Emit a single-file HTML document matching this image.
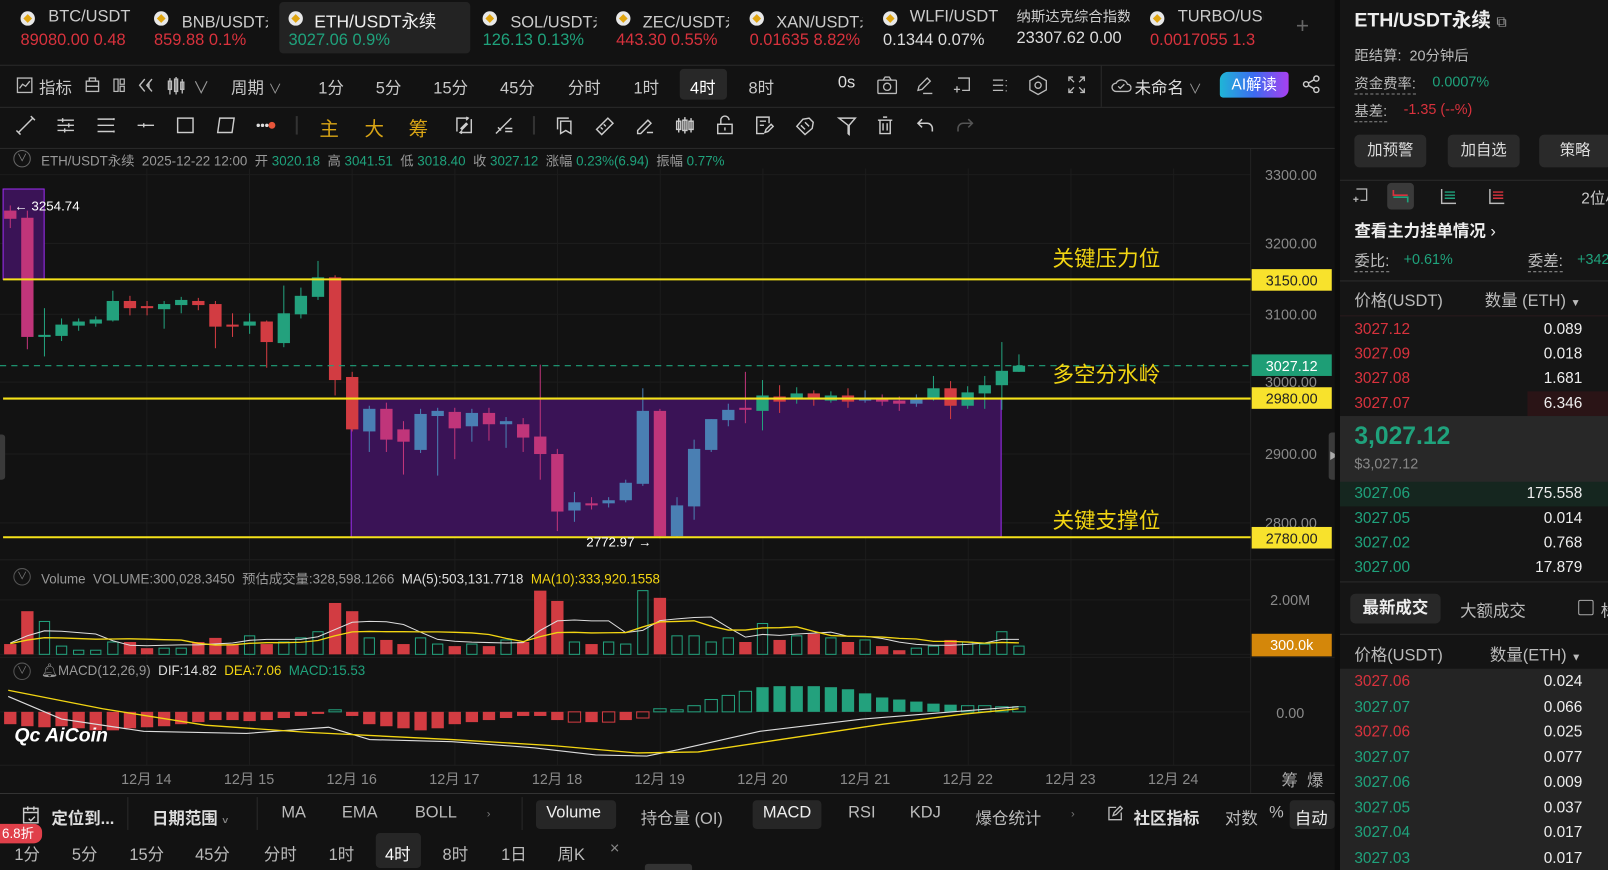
<!DOCTYPE html>
<html><head><meta charset="utf-8">
<style>
*{margin:0;padding:0;box-sizing:border-box}
html,body{width:1608px;height:870px;overflow:hidden;background:#121212}
body{font-family:"Liberation Sans","Noto Sans CJK SC",sans-serif;color:#c8c8c8}
#w{position:absolute;left:0;top:0;width:1566px;height:847px;transform:scale(1.0268,1.0272);transform-origin:0 0;background:#121212;overflow:hidden}
.a{position:absolute;white-space:nowrap}
.g{color:#1fa27c}.r{color:#d9323d}
.coin{position:absolute;width:14px;height:14px;border-radius:50%;background:#e8e8e8}
.coin:after{content:"";position:absolute;left:4px;top:4px;width:6px;height:6px;background:#e0a510;transform:rotate(45deg)}
.sep{position:absolute;background:#2a2a2a}
.t2{font-size:16px;color:#c8c8c8;top:72px}
.ic{position:absolute;top:112px;width:20px;height:20px}
.bt{font-size:16px;color:#bbb;top:783px}
.bt2{font-size:16px;color:#bbb;top:818px}
#rp{position:absolute;left:1305px;top:0;width:261px;height:847px;background:#151515}
.row{position:absolute;left:0;width:261px;height:24px;font-size:15px}
.row .p{position:absolute;left:14px;top:3px}
.row .q{position:absolute;right:25px;top:3px;color:#eee}
</style></head><body><div id="w">

<div class="a" style="left:272px;top:2px;width:186px;height:50px;background:#232323;border-radius:4px"></div>
<div class="coin" style="left:20px;top:11px"></div><div class="a" style="left:47px;top:8px;font-size:16px;color:#ccc">BTC/USDT</div><div class="a r" style="left:20px;top:31px;font-size:16px;width:110px;overflow:hidden">89080.00 0.48</div>
<div class="coin" style="left:150px;top:11px"></div><div class="a" style="left:177px;top:8px;font-size:16px;color:#ccc;width:84px;overflow:hidden">BNB/USDT永</div><div class="a r" style="left:150px;top:31px;font-size:16px">859.88 0.1%</div>
<div class="coin" style="left:281px;top:11px"></div><div class="a" style="left:306px;top:7px;font-size:17px;color:#eee">ETH/USDT永续</div><div class="a g" style="left:281px;top:31px;font-size:16px">3027.06 0.9%</div>
<div class="coin" style="left:470px;top:11px"></div><div class="a" style="left:497px;top:8px;font-size:16px;color:#ccc;width:84px;overflow:hidden">SOL/USDT永</div><div class="a g" style="left:470px;top:31px;font-size:16px">126.13 0.13%</div>
<div class="coin" style="left:600px;top:11px"></div><div class="a" style="left:626px;top:8px;font-size:16px;color:#ccc;width:84px;overflow:hidden">ZEC/USDT永</div><div class="a r" style="left:600px;top:31px;font-size:16px">443.30 0.55%</div>
<div class="coin" style="left:730px;top:11px"></div><div class="a" style="left:756px;top:8px;font-size:16px;color:#ccc;width:84px;overflow:hidden">XAN/USDT永</div><div class="a r" style="left:730px;top:31px;font-size:16px;width:110px;overflow:hidden">0.01635 8.82%</div>
<div class="coin" style="left:860px;top:11px"></div><div class="a" style="left:886px;top:8px;font-size:16px;color:#ccc">WLFI/USDT</div><div class="a" style="left:860px;top:31px;font-size:16px;color:#ddd">0.1344 0.07%</div>
<div class="a" style="left:990px;top:6px;font-size:14px;color:#ccc;width:110px;overflow:hidden">纳斯达克综合指数</div><div class="a" style="left:990px;top:29px;font-size:16px;color:#ddd;width:110px;overflow:hidden">23307.62 0.00</div>
<div class="coin" style="left:1120px;top:11px"></div><div class="a" style="left:1147px;top:8px;font-size:16px;color:#ccc;width:84px;overflow:hidden">TURBO/USDT</div><div class="a r" style="left:1120px;top:31px;font-size:16px;width:110px;overflow:hidden">0.0017055 1.3</div>
<div class="a" style="left:1262px;top:12px;font-size:22px;color:#666">+</div>
<div class="sep" style="left:0;top:63px;width:1300px;height:1px"></div>

<svg class="a" style="left:16px;top:75px" width="16" height="16" viewBox="0 0 16 16" fill="none" stroke="#bbb" stroke-width="1.3"><rect x="1" y="1" width="14" height="14"/><path d="M3 11l3-4 3 2 4-5"/></svg>
<div class="a t2" style="left:38px">指标</div>
<svg class="a" style="left:83px;top:75px" width="14" height="16" viewBox="0 0 14 16" fill="none" stroke="#bbb" stroke-width="1.3"><rect x="1" y="4" width="12" height="10"/><path d="M1 9h12M4 4V1h6v3"/></svg>
<svg class="a" style="left:110px;top:76px" width="12" height="14" viewBox="0 0 12 14" fill="none" stroke="#bbb" stroke-width="1.2"><rect x="1" y="1" width="4" height="12"/><rect x="7" y="1" width="4" height="5"/><rect x="7" y="8" width="4" height="5"/></svg>
<svg class="a" style="left:134px;top:75px" width="16" height="16" viewBox="0 0 16 16" fill="none" stroke="#bbb" stroke-width="1.4"><path d="M7 2L2 8l5 6M14 2l-5 6 5 6M11 5v6"/></svg>
<svg class="a" style="left:162px;top:74px" width="18" height="18" viewBox="0 0 18 18" fill="none" stroke="#bbb" stroke-width="1.3"><rect x="2" y="5" width="3" height="8"/><rect x="8" y="3" width="3" height="12"/><rect x="14" y="6" width="3" height="7"/><path d="M3.5 2v16M9.5 1v17M15.5 3v14"/></svg>
<div class="a t2" style="left:188px;color:#999">∨</div>
<div class="a t2" style="left:225px">周期 <span style="color:#999;font-size:13px">∨</span></div>
<div class="a t2" style="left:310px">1分</div><div class="a t2" style="left:366px">5分</div><div class="a t2" style="left:422px">15分</div><div class="a t2" style="left:487px">45分</div><div class="a t2" style="left:553px">分时</div><div class="a t2" style="left:617px">1时</div>
<div class="a" style="left:662px;top:67px;width:46px;height:30px;background:#282828;border-radius:4px"></div><div class="a t2" style="left:672px;color:#fff">4时</div>
<div class="a t2" style="left:729px">8时</div><div class="a t2" style="left:816px;color:#ddd">0s</div>
<svg class="a" style="left:854px;top:74px" width="20" height="18" viewBox="0 0 20 18" fill="none" stroke="#bbb" stroke-width="1.3"><rect x="1" y="4" width="18" height="13" rx="1"/><circle cx="10" cy="10.5" r="3.5"/><path d="M6 4l2-3h4l2 3"/></svg>
<svg class="a" style="left:891px;top:74px" width="18" height="18" viewBox="0 0 18 18" fill="none" stroke="#bbb" stroke-width="1.3"><path d="M3 14l1-4 8-8 3 3-8 8-4 1zM8 17h9"/></svg>
<svg class="a" style="left:928px;top:74px" width="18" height="18" viewBox="0 0 18 18" fill="none" stroke="#bbb" stroke-width="1.3"><path d="M5 2h11v12H9M1 13h6M4 10v6"/></svg>
<svg class="a" style="left:966px;top:75px" width="16" height="16" viewBox="0 0 16 16" fill="none" stroke="#bbb" stroke-width="1.3"><path d="M1 3h10M1 8h10M1 13h10M14 3v1M14 8v1M14 13v1"/></svg>
<svg class="a" style="left:1002px;top:73px" width="18" height="20" viewBox="0 0 18 20" fill="none" stroke="#bbb" stroke-width="1.3"><path d="M9 1l8 4.5v9L9 19l-8-4.5v-9z"/><circle cx="9" cy="10" r="3"/></svg>
<svg class="a" style="left:1040px;top:74px" width="17" height="17" viewBox="0 0 17 17" fill="none" stroke="#bbb" stroke-width="1.3"><path d="M1 5V1h4M12 1h4v4M16 12v4h-4M5 16H1v-4M1 1l5 5M16 1l-5 5M16 16l-5-5M1 16l5-5"/></svg>
<div class="sep" style="left:1072px;top:64px;width:1px;height:40px"></div>
<svg class="a" style="left:1082px;top:75px" width="20" height="16" viewBox="0 0 20 16" fill="none" stroke="#bbb" stroke-width="1.3"><path d="M5 14a4 4 0 010-8 6 6 0 0111 1 3.5 3.5 0 010 7z"/><path d="M7 9l2 2 4-4"/></svg>
<div class="a t2" style="left:1105px;color:#ddd">未命名 <span style="color:#999;font-size:13px">∨</span></div>
<div class="a" style="left:1188px;top:70px;width:67px;height:25px;border-radius:8px 3px 8px 3px;background:linear-gradient(90deg,#1fb5d6,#3d6bf0,#a840f0);color:#fff;font-size:15px;text-align:center;line-height:25px">AI解读</div>
<svg class="a" style="left:1268px;top:73px" width="18" height="18" viewBox="0 0 18 18" fill="none" stroke="#ccc" stroke-width="1.4"><circle cx="14" cy="3.5" r="2.5"/><circle cx="4" cy="9" r="2.5"/><circle cx="14" cy="14.5" r="2.5"/><path d="M6 8l6-3.5M6 10l6 3.5"/></svg>
<div class="sep" style="left:0;top:104px;width:1300px;height:1px"></div>

<svg class="ic" style="left:15px" viewBox="0 0 20 20" fill="none" stroke="#ccc" stroke-width="1.4"><path d="M3 17L17 3M1 15l4 4M15 1l4 4"/></svg>
<svg class="ic" style="left:54px" viewBox="0 0 20 20" fill="none" stroke="#ccc" stroke-width="1.4"><path d="M2 5h16M2 10h16M2 15h16M7 3v4M13 8v4M9 13v4"/></svg>
<svg class="ic" style="left:93px" viewBox="0 0 20 20" fill="none" stroke="#ccc" stroke-width="1.4"><path d="M2 4h16M2 10h16M2 16h16M18 3v2M18 15v2"/></svg>
<svg class="ic" style="left:132px" viewBox="0 0 20 20" fill="none" stroke="#ccc" stroke-width="1.4"><path d="M2 10h16M8 8v4"/></svg>
<svg class="ic" style="left:171px" viewBox="0 0 20 20" fill="none" stroke="#ccc" stroke-width="1.4"><rect x="2" y="3" width="15" height="14"/></svg>
<svg class="ic" style="left:210px" viewBox="0 0 20 20" fill="none" stroke="#ccc" stroke-width="1.4"><path d="M4 3h14l-2 14H2z"/></svg>
<svg class="ic" style="left:249px" viewBox="0 0 24 20"><circle cx="3" cy="10" r="2" fill="#ddd"/><circle cx="8" cy="10" r="2" fill="#ddd"/><circle cx="13" cy="10" r="2" fill="#ddd"/><circle cx="19" cy="10" r="4" fill="#e8553a"/></svg>
<div class="sep" style="left:288px;top:113px;width:2px;height:18px;background:#333"></div>
<div class="a" style="left:311px;top:111px;font-size:19px;color:#d9a515">主</div>
<div class="a" style="left:355px;top:111px;font-size:19px;color:#d9a515">大</div>
<div class="a" style="left:398px;top:111px;font-size:19px;color:#d9a515">筹</div>
<svg class="ic" style="left:442px" viewBox="0 0 20 20" fill="none" stroke="#ccc" stroke-width="1.4"><path d="M3 16V3h11M17 4v13H6M12 2l2 1-2 2M8 18l-2-1 2-2M7 13l5-5 1 1-5 5z"/></svg>
<svg class="ic" style="left:481px" viewBox="0 0 20 20" fill="none" stroke="#ccc" stroke-width="1.4"><path d="M2 18L17 3M4 12l3 3M11 13h7M11 16h7"/></svg>
<div class="sep" style="left:519px;top:113px;width:2px;height:18px;background:#333"></div>
<svg class="ic" style="left:540px" viewBox="0 0 20 20" fill="none" stroke="#ccc" stroke-width="1.4"><path d="M3 14V3h11M6 6h10v12l-5-3-5 3z"/></svg>
<svg class="ic" style="left:579px" viewBox="0 0 20 20" fill="none" stroke="#ccc" stroke-width="1.4"><path d="M2 14L13 3l5 5L7 19zM6 12l2 2M9 9l2 2"/></svg>
<svg class="ic" style="left:618px" viewBox="0 0 20 20" fill="none" stroke="#ccc" stroke-width="1.4"><path d="M3 15L13 5l3 3L6 18H3zM12 17h6"/></svg>
<svg class="ic" style="left:657px" viewBox="0 0 20 20" fill="none" stroke="#ccc" stroke-width="1.4"><rect x="2" y="6" width="4" height="8"/><rect x="8" y="5" width="4" height="10"/><rect x="14" y="6" width="4" height="8"/><path d="M4 3v14M10 2v16M16 3v14"/></svg>
<svg class="ic" style="left:696px" viewBox="0 0 20 20" fill="none" stroke="#ccc" stroke-width="1.4"><rect x="3" y="9" width="14" height="9"/><path d="M6 9V5a4 4 0 018 0M10 12v3"/></svg>
<svg class="ic" style="left:734px" viewBox="0 0 20 20" fill="none" stroke="#ccc" stroke-width="1.4"><path d="M15 8V2H3v16h7M6 6h6M6 10h4M11 17l1-3 5-5 2 2-5 5z"/></svg>
<svg class="ic" style="left:774px" viewBox="0 0 20 20" fill="none" stroke="#ccc" stroke-width="1.4"><path d="M8 4l6-1 4 4-1 6-7 6-8-8zM6 10l4 4M10 7l4 4"/></svg>
<svg class="ic" style="left:815px" viewBox="0 0 20 20" fill="none" stroke="#ccc" stroke-width="1.4"><path d="M2 3h16l-6 7v9l-1-1V10z"/></svg>
<svg class="ic" style="left:852px" viewBox="0 0 20 20" fill="none" stroke="#ccc" stroke-width="1.4"><path d="M3 5h14M5 5v13h10V5M8 2h4M8 8v7M12 8v7"/></svg>
<svg class="ic" style="left:891px" viewBox="0 0 20 20" fill="none" stroke="#ccc" stroke-width="1.5"><path d="M7 4L3 8l4 4M3 8h9a5 5 0 015 5v3"/></svg>
<svg class="ic" style="left:930px" viewBox="0 0 20 20" fill="none" stroke="#555" stroke-width="1.5"><path d="M13 4l4 4-4 4M17 8H8a5 5 0 00-5 5v3"/></svg>
<div class="sep" style="left:0;top:144px;width:1300px;height:1px"></div>

<div class="a" style="left:13px;top:146px;width:17px;height:17px;border:1px solid #666;border-radius:50%;font-size:10px;text-align:center;line-height:15px;color:#888">∨</div>
<div class="a" style="left:40px;top:146px;font-size:13px;color:#999">ETH/USDT永续 &nbsp;2025-12-22 12:00 &nbsp;开 <span class="g">3020.18</span> &nbsp;高 <span class="g">3041.51</span> &nbsp;低 <span class="g">3018.40</span> &nbsp;收 <span class="g">3027.12</span> &nbsp;涨幅 <span class="g">0.23%(6.94)</span> &nbsp;振幅 <span class="g">0.77%</span></div>

<svg id="ch" class="a" style="left:0;top:0" width="1300" height="847" font-family="Liberation Sans, Noto Sans CJK SC, sans-serif"></svg>

<div class="a" style="left:1025px;top:236px;font-size:21px;color:#f2d512">关键压力位</div>
<div class="a" style="left:1025px;top:349px;font-size:21px;color:#f2d512">多空分水岭</div>
<div class="a" style="left:1025px;top:491px;font-size:21px;color:#f2d512">关键支撑位</div>

<div class="a" style="left:13px;top:553px;width:17px;height:17px;border:1px solid #555;border-radius:50%;font-size:10px;text-align:center;line-height:15px;color:#777">∨</div>
<div class="a" style="left:40px;top:553px;font-size:13px;color:#999">Volume &nbsp;VOLUME:300,028.3450 &nbsp;预估成交量:328,598.1266 &nbsp;<span style="color:#ddd">MA(5):503,131.7718</span> &nbsp;<span style="color:#f2d512">MA(10):333,920.1558</span></div>
<div class="a" style="left:13px;top:645px;width:17px;height:17px;border:1px solid #555;border-radius:50%;font-size:10px;text-align:center;line-height:15px;color:#777">∨</div>
<div class="a" style="left:40px;top:645px;font-size:13px;color:#999">🔔︎MACD(12,26,9) &nbsp;<span style="color:#ddd">DIF:14.82</span> &nbsp;<span style="color:#f2d512">DEA:7.06</span> &nbsp;<span class="g">MACD:15.53</span></div>
<div class="a" style="left:14px;top:706px;font-size:19px;font-weight:bold;color:#fff;font-style:italic">Qc AiCoin</div>

<div class="a" style="left:0;top:748px;width:1300px;font-size:14px;color:#8a8a8a">
<span class="a" style="left:118px">12月 14</span><span class="a" style="left:218px">12月 15</span><span class="a" style="left:318px">12月 16</span><span class="a" style="left:418px">12月 17</span><span class="a" style="left:518px">12月 18</span><span class="a" style="left:618px">12月 19</span><span class="a" style="left:718px">12月 20</span><span class="a" style="left:818px">12月 21</span><span class="a" style="left:918px">12月 22</span><span class="a" style="left:1018px">12月 23</span><span class="a" style="left:1118px">12月 24</span><span class="a" style="left:1248px;color:#aaa;font-size:16px;top:-2px">筹 &nbsp;爆</span></div>
<div class="sep" style="left:0;top:772px;width:1300px;height:1px;background:#333"></div>

<svg class="a" style="left:20px;top:783px" width="20" height="20" viewBox="0 0 20 20" fill="none" stroke="#ccc" stroke-width="1.4"><path d="M3 4h14v14H3zM3 8h14M7 2v4M13 2v4M8 14l2 2 4-4"/></svg>
<div class="a bt" style="left:50px;color:#ddd;font-weight:bold">定位到...</div>
<div class="sep" style="left:124px;top:776px;width:1px;height:32px"></div>
<div class="a bt" style="left:148px;color:#ddd;font-weight:bold">日期范围 <span style="font-size:10px;color:#888">˅</span></div>
<div class="sep" style="left:250px;top:776px;width:1px;height:32px"></div>
<div class="a bt" style="left:274px">MA</div><div class="a bt" style="left:333px">EMA</div><div class="a bt" style="left:404px">BOLL</div><div class="a bt" style="left:474px;font-size:11px;top:787px;color:#777">›</div>
<div class="sep" style="left:508px;top:776px;width:1px;height:32px"></div>
<div class="a" style="left:522px;top:779px;width:78px;height:28px;background:#262626;border-radius:4px"></div><div class="a bt" style="left:532px;color:#eee">Volume</div>
<div class="a bt" style="left:624px">持仓量 (OI)</div>
<div class="a" style="left:733px;top:779px;width:67px;height:28px;background:#262626;border-radius:4px"></div><div class="a bt" style="left:743px;color:#eee">MACD</div>
<div class="a bt" style="left:826px">RSI</div><div class="a bt" style="left:886px">KDJ</div><div class="a bt" style="left:950px">爆仓统计</div><div class="a bt" style="left:1043px;font-size:11px;top:787px;color:#777">›</div>
<svg class="a" style="left:1078px;top:784px" width="16" height="16" viewBox="0 0 16 16" fill="none" stroke="#bbb" stroke-width="1.3"><path d="M9 2H2v12h12V7M6 10l1-3 6-6 2 2-6 6z"/></svg>
<div class="a bt" style="left:1104px;color:#ddd;font-weight:bold">社区指标</div>
<div class="a bt" style="left:1193px">对数</div><div class="a bt" style="left:1236px">%</div>
<div class="a" style="left:1256px;top:779px;width:44px;height:28px;background:#262626;border-radius:4px"></div><div class="a bt" style="left:1261px;color:#eee">自动</div>
<div class="a" style="left:0;top:802px;width:41px;height:19px;background:#e0404a;border-radius:0 8px 8px 0;color:#fff;font-size:13px;line-height:19px;padding-left:2px">6.8折</div>
<div class="a bt2" style="left:14px">1分</div><div class="a bt2" style="left:70px">5分</div><div class="a bt2" style="left:126px">15分</div><div class="a bt2" style="left:190px">45分</div><div class="a bt2" style="left:257px">分时</div><div class="a bt2" style="left:320px">1时</div>
<div class="a" style="left:366px;top:811px;width:44px;height:34px;background:#262626;border-radius:4px"></div><div class="a bt2" style="left:375px;color:#fff">4时</div>
<div class="a bt2" style="left:431px">8时</div><div class="a bt2" style="left:488px">1日</div><div class="a bt2" style="left:543px">周K</div><div class="a bt2" style="left:594px;color:#888">×</div>
<div class="a" style="left:628px;top:841px;width:46px;height:6px;background:#333;border-radius:3px 3px 0 0"></div>
<div class="a" style="left:0;top:423px;width:5px;height:44px;background:#3a3a3a;border-radius:0 3px 3px 0"></div>
<div class="a" style="left:1294px;top:421px;width:10px;height:46px;background:#3a3a3a;border-radius:3px 0 0 3px;color:#aaa;font-size:9px;line-height:46px;text-align:center">▶</div>
<div class="a" style="left:1300px;top:0;width:5px;height:847px;background:#0c0c0c"></div>

<div id="rp">
<div class="a" style="left:14px;top:5px;font-size:19px;font-weight:bold;color:#eee">ETH/USDT永续 <span style="font-size:14px;color:#aaa;font-weight:normal">⧉</span></div>
<div class="a" style="left:14px;top:44px;font-size:14px;color:#bbb">距结算: &nbsp;20分钟后</div>
<div class="a" style="left:14px;top:71px;font-size:14px;color:#bbb;border-bottom:1px dashed #888">资金费率:</div><div class="a g" style="left:90px;top:71px;font-size:14px">0.0007%</div>
<div class="a" style="left:14px;top:98px;font-size:14px;color:#bbb;border-bottom:1px dashed #888">基差:</div><div class="a r" style="left:62px;top:98px;font-size:14px">-1.35 (--%)</div>
<div class="a" style="left:14px;top:131px;width:70px;height:32px;background:#2a2a2a;border-radius:5px;text-align:center;line-height:32px;font-size:15px;color:#ddd">加预警</div>
<div class="a" style="left:105px;top:131px;width:70px;height:32px;background:#2a2a2a;border-radius:5px;text-align:center;line-height:32px;font-size:15px;color:#ddd">加自选</div>
<div class="a" style="left:194px;top:131px;width:70px;height:32px;background:#2a2a2a;border-radius:5px;text-align:center;line-height:32px;font-size:15px;color:#ddd">策略</div>
<div class="a" style="left:0;top:175px;width:261px;height:1px;background:#2c2c2c"></div>
<svg class="a" style="left:12px;top:182px" width="16" height="16" viewBox="0 0 16 16" fill="none" stroke="#bbb" stroke-width="1.2"><path d="M4 2h10v11H8M1 12h5M3.5 9.5v5"/></svg>
<div class="a" style="left:46px;top:178px;width:26px;height:26px;background:#3a3a3a;border-radius:4px"></div>
<svg class="a" style="left:51px;top:183px" width="16" height="16" viewBox="0 0 16 16" fill="none" stroke-width="1.6"><path d="M1 2v5h14" stroke="#d9323d"/><path d="M1 9h14v5" stroke="#1fa27c"/></svg>
<svg class="a" style="left:98px;top:183px" width="16" height="16" viewBox="0 0 16 16" fill="none" stroke-width="1.4"><path d="M1 1v14h14" stroke="#bbb"/><path d="M4 4h10M4 7h10M4 10h10" stroke="#1fa27c"/></svg>
<svg class="a" style="left:145px;top:183px" width="16" height="16" viewBox="0 0 16 16" fill="none" stroke-width="1.4"><path d="M1 1v14h14" stroke="#bbb"/><path d="M4 4h10M4 7h10M4 10h10" stroke="#d9323d"/></svg>
<div class="a" style="left:235px;top:182px;font-size:15px;color:#ccc">2位小数</div>
<div class="a" style="left:14px;top:211px;font-size:16px;font-weight:bold;color:#eee">查看主力挂单情况 <span style="font-weight:normal">›</span></div>
<div class="a" style="left:14px;top:243px;font-size:15px;color:#bbb;border-bottom:1px dashed #888">委比:</div><div class="a g" style="left:62px;top:244px;font-size:14px">+0.61%</div>
<div class="a" style="left:183px;top:243px;font-size:15px;color:#bbb;border-bottom:1px dashed #888">委差:</div><div class="a g" style="left:231px;top:244px;font-size:14px">+342</div>
<div class="a" style="left:0;top:273px;width:261px;height:1px;background:#2c2c2c"></div>
<div class="a" style="left:14px;top:279px;font-size:16px;color:#bbb">价格(USDT)</div><div class="a" style="left:141px;top:279px;font-size:16px;color:#bbb">数量 (ETH) <span style="font-size:10px">▼</span></div>
<div class="a" style="left:0;top:307px;width:261px;height:1px;background:#2a1a1c"></div>
<div class="row" style="top:309px"><span class="p r">3027.12</span><span class="q">0.089</span></div>
<div class="row" style="top:333px"><span class="p r">3027.09</span><span class="q">0.018</span></div>
<div class="row" style="top:357px"><span class="p r">3027.08</span><span class="q">1.681</span></div>
<div class="row" style="top:381px;background:linear-gradient(90deg,transparent 70%,#2a1416 70%)"><span class="p r">3027.07</span><span class="q">6.346</span></div>
<div class="a" style="left:0;top:405px;width:261px;height:75px;background:#282828"></div>
<div class="a g" style="left:14px;top:411px;font-size:24px;font-weight:bold">3,027.12</div>
<div class="a" style="left:14px;top:443px;font-size:14px;color:#888">$3,027.12</div>
<div class="row" style="top:469px;background:#15261f"><span class="p g">3027.06</span><span class="q">175.558</span></div>
<div class="row" style="top:493px"><span class="p g">3027.05</span><span class="q">0.014</span></div>
<div class="row" style="top:517px"><span class="p g">3027.02</span><span class="q">0.768</span></div>
<div class="row" style="top:541px"><span class="p g">3027.00</span><span class="q">17.879</span></div>
<div class="a" style="left:0;top:566px;width:261px;height:1px;background:#2c2c2c"></div>
<div class="a" style="left:10px;top:578px;width:88px;height:29px;background:#282828;border-radius:5px;text-align:center;line-height:29px;font-size:16px;font-weight:bold;color:#eee">最新成交</div>
<div class="a" style="left:117px;top:581px;font-size:16px;color:#bbb">大额成交</div>
<div class="a" style="left:232px;top:584px;width:15px;height:15px;border:1px solid #aaa;border-radius:2px"></div><div class="a" style="left:254px;top:581px;font-size:16px;color:#bbb">标</div>
<div class="a" style="left:0;top:617px;width:261px;height:34px;background:#141414;border-top:1px solid #2c2c2c"></div>
<div class="a" style="left:14px;top:624px;font-size:16px;color:#bbb">价格(USDT)</div><div class="a" style="left:146px;top:624px;font-size:16px;color:#bbb">数量(ETH) <span style="font-size:10px">▼</span></div>
<div class="a" style="left:0;top:651px;width:261px;height:196px;background:#242424"></div>
<div class="row" style="top:652px"><span class="p r">3027.06</span><span class="q">0.024</span></div>
<div class="row" style="top:677px"><span class="p g">3027.07</span><span class="q">0.066</span></div>
<div class="row" style="top:701px"><span class="p r">3027.06</span><span class="q">0.025</span></div>
<div class="row" style="top:726px"><span class="p g">3027.07</span><span class="q">0.077</span></div>
<div class="row" style="top:750px"><span class="p g">3027.06</span><span class="q">0.009</span></div>
<div class="row" style="top:775px"><span class="p g">3027.05</span><span class="q">0.037</span></div>
<div class="row" style="top:799px"><span class="p g">3027.04</span><span class="q">0.017</span></div>
<div class="row" style="top:824px"><span class="p g">3027.03</span><span class="q">0.017</span></div>
</div>

<script>
(function(){
var s=document.getElementById('ch'),h='';
function R(x,y,w,hh,f,st){h+='<rect x="'+x+'" y="'+y+'" width="'+w+'" height="'+Math.max(hh,1)+'" fill="'+f+'"'+(st?' stroke="'+st+'"':'')+'/>';}
function L(x1,y1,x2,y2,c,w,d){h+='<line x1="'+x1+'" y1="'+y1+'" x2="'+x2+'" y2="'+y2+'" stroke="'+c+'" stroke-width="'+(w||1)+'"'+(d?' stroke-dasharray="'+d+'"':'')+'/>';}
function T(x,y,t,c,sz,a){h+='<text x="'+x+'" y="'+y+'" fill="'+c+'" font-size="'+(sz||13)+'"'+(a?' text-anchor="'+a+'"':'')+'>'+t+'</text>';}
[170,237,306,372,442,509].forEach(function(y){L(0,y,1218,y,'#1c1c1c');});
for(var gx=143;gx<1218;gx+=100){L(gx,164,gx,745,'#1c1c1c');}
[584,637].forEach(function(y){L(0,y,1218,y,'#1c1c1c');});L(0,693,1218,693,'#1c1c1c');
L(0,545,1300,545,'#1e1e1e');L(0,640,1300,640,'#1e1e1e');L(0,745,1300,745,'#1e1e1e');
L(1218,145,1218,772,'#222');
[['3300.00',175],['3200.00',242],['3100.00',311],['3000.00',377],['2900.00',447],['2800.00',514]].forEach(function(a){T(1232,a[1],a[0],'#8a8a8a',14);});
T(1237,589,'2.00M','#8a8a8a',14);T(1243,699,'0.00','#8a8a8a',14);
R(3,184,40,88,'#3a1356','#9b2cf0');
R(342,388,633,135,'#3a1356','#9b2cf0');
var C=[[205,213,200,222,0],[212,328,205,340,0],[326,328,300,347,1],[316,327,310,332,1],[313,317,310,322,1],[311,315,308,318,1],[293,312,283,313,1],[293,300,288,307,0],[298,300,293,307,0],[296,301,293,320,1],[292,297,289,305,1],[293,297,290,302,0],[296,318,293,339,0],[316,318,305,328,0],[313,317,305,325,1],[313,333,312,358,0],[305,334,278,338,1],[288,306,280,310,1],[270,289,254,292,1],[270,370,268,385,0],[367,418,362,420,0],
[398,420,395,440,1],[398,428,392,440,0],[418,430,410,462,0],[403,438,398,441,1],[400,405,397,463,1],[401,417,397,447,0],[402,415,398,430,1],[402,413,397,429,0],[410,413,406,436,1],[413,426,407,440,0],[425,442,355,467,0],[442,498,437,517,0],[489,497,479,508,1],[490,492,484,496,0],[487,490,484,494,1],[470,487,467,489,1],[400,471,378,473,1],[400,522,398,524,0],[492,522,484,523,1],[437,493,428,506,1],[408,438,408,440,1],[399,409,393,415,1],[397,399,362,412,0],[385,400,370,419,1],[386,391,375,402,0],[383,388,377,393,1],[383,388,380,395,0],[385,390,381,392,1],[385,391,378,397,0],[388,390,380,392,1],[388,391,384,395,0],[390,393,386,400,0],[388,393,384,396,1],[378,388,366,390,1],[378,395,371,408,0],[382,395,376,398,1],[375,383,366,398,1],[361,375,333,399,1],[356,362,345,362,1]];
var X=function(i){return 10+i*16.65;};
C.forEach(function(c,i){var x=X(i),up=c[4];
var col=up?'#23a17d':'#d23c42';
if(i<2)col='#c0357a';
if(i>=21&&i<=56){col=up?'#4a7fb3':'#c0357a'; if(c[0]<388&&i>=44){col=up?'#23a17d':'#d23c42';}}
if(i==20)col='#d23c42';
L(x,c[2],x,c[3],col,1);R(x-6,c[0],12,c[1]-c[0],col);});
L(3,272,1218,272,'#f5e21a',2);L(3,388,1218,388,'#f5e21a',2);L(3,523,1218,523,'#f5e21a',2);
L(0,356,1218,356,'#1fa27c',1,'6 5');
h+='<rect x="1219" y="262" width="78" height="21" fill="#f8e22c"/>';T(1258,278,'3150.00','#222',14,'middle');
h+='<rect x="1219" y="377" width="78" height="21" fill="#f8e22c"/>';T(1258,393,'2980.00','#222',14,'middle');
h+='<rect x="1219" y="513" width="78" height="21" fill="#f8e22c"/>';T(1258,529,'2780.00','#222',14,'middle');
h+='<rect x="1219" y="345" width="78" height="21" fill="#1e9e76"/>';T(1258,361,'3027.12','#fff',14,'middle');
h+='<rect x="1219" y="617" width="78" height="22" fill="#d4870a"/>';T(1258,633,'300.0k','#fff',14,'middle');
T(14,205,'← 3254.74','#fff',13);T(571,532,'2772.97 →','#fff',13);
var V=[10,42,32,8,4,4,12,12,6,6,6,12,16,10,18,10,12,16,22,50,42,16,14,10,16,10,8,10,8,14,12,62,52,12,10,12,10,62,55,18,18,12,16,12,30,14,18,20,16,12,14,8,4,6,8,14,12,10,22,8];
C.forEach(function(c,i){var x=X(i),v=V[i]||6,up=c[4];if(up)R(x-5,637-v,10,v,'none','#23a17d');else R(x-6,637-v,12,v,'#d23c42');});
var m5='',m10='';C.forEach(function(c,i){var x=X(i);var a=0,b=0;for(var k=0;k<5;k++)a+=V[Math.max(0,i-k)];for(k=0;k<10;k++)b+=V[Math.max(0,i-k)];m5+=(i?'L':'M')+x+' '+(637-a/5*1.1)+' ';m10+=(i?'L':'M')+x+' '+(637-b/10*1.05)+' ';});
h+='<path d="'+m5+'" fill="none" stroke="#ddd" stroke-width="1"/><path d="'+m10+'" fill="none" stroke="#f2d512" stroke-width="1.3"/>';
var M=[-12,-14,-15,-14,-16,-18,-18,-16,-15,-14,-12,-10,-8,-8,-9,-8,-6,-4,-2,2,-4,-12,-14,-16,-18,-16,-12,-10,-8,-6,-4,-4,-8,-10,-10,-10,-8,-6,3,2,6,12,16,20,24,25,25,25,24,22,18,14,12,10,8,7,6,6,5,5];
M.forEach(function(m,i){var x=X(i);var col=m>0?'#23a17d':'#d23c42';var hol=(m>0&&(i<44||i>55))||(m<0&&(i==41||i>=32&&i<=37&&i%2));
if(m>0)R(x-6,693-m,12,m,hol?'none':col,hol?col:null);else R(x-6,693,12,-m,hol?'none':col,hol?col:null);});
h+='<path d="M8 678 L60 700 L140 712 L240 714 L320 708 L360 720 L440 722 L520 728 L580 735 L630 736 L660 730 L740 712 L840 700 L940 692 L992 688" fill="none" stroke="#dddddd" stroke-width="1.1"/>';
h+='<path d="M8 672 L100 690 L200 706 L300 713 L440 720 L540 726 L620 733 L680 732 L760 720 L860 705 L940 695 L992 690" fill="none" stroke="#f2d512" stroke-width="1.3"/>';
s.innerHTML=h;
})();
</script>
</div></body></html>
